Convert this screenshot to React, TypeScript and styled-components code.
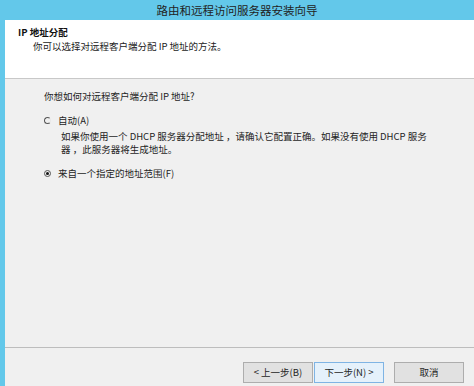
import React from "react";
import styled, { createGlobalStyle } from "styled-components";

const GlobalStyle = createGlobalStyle`
  html, body {
    margin: 0;
    padding: 0;
    background: #f0f0f0;
  }
  body {
    font-family: "Noto Sans CJK SC", "Liberation Sans", sans-serif;
    font-size: 9.5px;
    color: #1e1e1e;
  }
`;

const Window = styled.div`
  width: 474px;
  height: 386px;
  display: flex;
  flex-direction: column;
  box-sizing: border-box;
  border-left: 5px solid #63c8ea;
  background: #f0f0f0;
  overflow: hidden;
`;

const TitleBar = styled.div`
  height: 20px;
  margin-left: -5px;
  background: #63c8ea;
  display: flex;
  align-items: center;
  justify-content: center;
  font-size: 11.5px;
  color: #222;
  line-height: 20px;
`;

const Header = styled.div`
  height: 59px;
  background: #ffffff;
  border-bottom: 1px solid #c8c8c8;
  padding: 5px 0 0 13px;
  box-sizing: border-box;
`;

const HeaderTitle = styled.div`
  font-weight: bold;
  line-height: 14px;
  color: #111;
`;

const HeaderSub = styled.div`
  line-height: 14px;
  padding-left: 15px;
  color: #222;
`;

const Body = styled.div`
  flex: 1;
  padding: 11px 0 0 39px;
  display: flex;
  flex-direction: column;
`;

const Question = styled.div`
  line-height: 13px;
  margin-bottom: 11px;
`;

const OptionRow = styled.label`
  display: flex;
  align-items: center;
  gap: 7px;
  line-height: 13px;
`;

const Radio = styled.span<{ $checked?: boolean }>`
  width: 7px;
  height: 7px;
  border-radius: 50%;
  border: 1px solid #555;
  border-right-color: ${(p) => (p.$checked ? "#555" : "#e8e8e8")};
  box-sizing: border-box;
  display: flex;
  align-items: center;
  justify-content: center;
  &::after {
    content: "";
    display: ${(p) => (p.$checked ? "block" : "none")};
    width: 3px;
    height: 3px;
    border-radius: 50%;
    background: #111;
  }
`;

const Description = styled.div`
  width: 368px;
  padding-left: 17px;
  margin-top: 3px;
  margin-bottom: 11px;
  line-height: 13px;
`;

const Footer = styled.div`
  border-top: 1px solid #bdbdbd;
  height: 39px;
  display: flex;
  justify-content: flex-end;
  align-items: flex-start;
  padding: 14px 10px 0 0;
  box-sizing: border-box;
`;

const Button = styled.button<{ $focused?: boolean; $gap?: number }>`
  width: 70px;
  height: 21px;
  margin-left: ${(p) => p.$gap ?? 0}px;
  box-sizing: border-box;
  border: 1px solid ${(p) => (p.$focused ? "#7fb4e4" : "#adadad")};
  background: ${(p) => (p.$focused ? "#e5f1fb" : "#e1e1e1")};
  font-family: "Noto Sans CJK SC", "Liberation Sans", sans-serif;
  font-size: 9.5px;
  color: #1e1e1e;
  padding: 0;
  line-height: 19px;
`;

export default function App() {
  return (
    <>
      <GlobalStyle />
      <Window>
        <TitleBar>路由和远程访问服务器安装向导</TitleBar>
        <Header>
          <HeaderTitle>IP 地址分配</HeaderTitle>
          <HeaderSub>你可以选择对远程客户端分配 IP 地址的方法。</HeaderSub>
        </Header>
        <Body>
          <Question>你想如何对远程客户端分配 IP 地址?</Question>
          <OptionRow>
            <Radio />
            自动(A)
          </OptionRow>
          <Description>
            如果你使用一个 DHCP 服务器分配地址 ，请确认它配置正确。如果没有使用 DHCP 服务器 ，此服务器将生成地址。
          </Description>
          <OptionRow>
            <Radio $checked />
            来自一个指定的地址范围(F)
          </OptionRow>
        </Body>
        <Footer>
          <Button>&lt; 上一步(B)</Button>
          <Button $focused $gap={1}>
            下一步(N) &gt;
          </Button>
          <Button $gap={10}>取消</Button>
        </Footer>
      </Window>
    </>
  );
}
